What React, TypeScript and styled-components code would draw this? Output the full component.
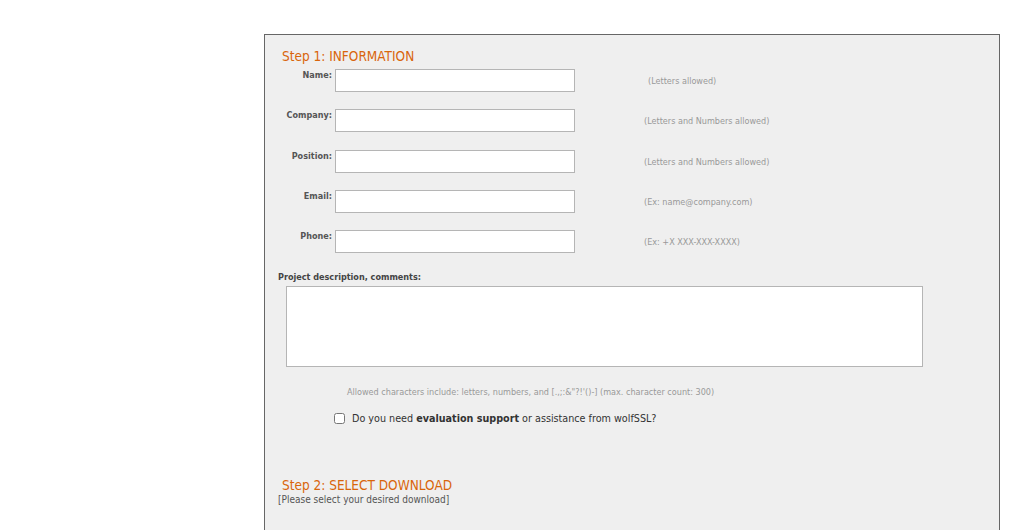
import React from "react";
import styled, { createGlobalStyle } from "styled-components";

const GlobalStyle = createGlobalStyle`
  body {
    margin: 0;
    background: #fff;
    font-family: "DejaVu Sans Condensed", "DejaVu Sans", sans-serif;
  }
`;

const fields = [
  { label: "Name:", hint: "(Letters allowed)", indent: 4 },
  { label: "Company:", hint: "(Letters and Numbers allowed)", indent: 0 },
  { label: "Position:", hint: "(Letters and Numbers allowed)", indent: 0 },
  { label: "Email:", hint: "(Ex: name@company.com)", indent: 0 },
  { label: "Phone:", hint: "(Ex: +X XXX-XXX-XXXX)", indent: 0 },
];

export default function App() {
  return (
    <Page>
      <GlobalStyle />
      <Panel>
        <StepTitle>Step 1: INFORMATION</StepTitle>
        <Fields>
          {fields.map((f) => (
            <FieldRow key={f.label}>
              <Label>{f.label}</Label>
              <TextInput type="text" />
              <Hint $indent={f.indent}>{f.hint}</Hint>
            </FieldRow>
          ))}
        </Fields>

        <CommentLabel>Project description, comments:</CommentLabel>
        <Comments />
        <Allowed>
          Allowed characters include: letters, numbers, and [.,;:&amp;"?!'()-] (max. character count: 300)
        </Allowed>
        <SupportRow>
          <Check type="checkbox" />
          <SupportText>
            Do you need <b>evaluation support</b> or assistance from wolfSSL?
          </SupportText>
        </SupportRow>

        <StepTitle $second>Step 2: SELECT DOWNLOAD</StepTitle>
        <Note>[Please select your desired download]</Note>
      </Panel>
    </Page>
  );
}

const Page = styled.div`
  padding: 34px 10px 0 264px;
  height: 530px;
  box-sizing: border-box;
  overflow: hidden;
`;

const Panel = styled.div`
  width: 736px;
  min-height: 540px;
  box-sizing: border-box;
  border: 1px solid #666;
  border-bottom: none;
  background: #efefef;
  padding: 14px 0 0 0;
`;

const StepTitle = styled.div<{ $second?: boolean }>`
  margin: ${(p) => (p.$second ? "53px 0 0 17px" : "0 0 0 17px")};
  font-size: 13.5px;
  line-height: 15px;
  color: #d9650b;
`;

const Fields = styled.div`
  display: flex;
  flex-direction: column;
  margin-top: 5px;
`;

const FieldRow = styled.div`
  display: grid;
  grid-template-columns: 67px 240px auto;
  column-gap: 3px;
  height: 40.25px;
`;

const Label = styled.div`
  text-align: right;
  font-size: 9px;
  font-weight: bold;
  color: #555;
  padding-top: 1px;
`;

const TextInput = styled.input`
  width: 240px;
  height: 23px;
  box-sizing: border-box;
  border: 1px solid #b5b5b5;
  background: #fff;
  margin: 0;
  padding: 2px 4px;
`;

const Hint = styled.div<{ $indent: number }>`
  padding: 1px 0 0 ${(p) => 66 + p.$indent}px;
  font-size: 9px;
  color: #999;
  line-height: 23px;
`;

const CommentLabel = styled.div`
  margin: 2px 0 0 13px;
  font-size: 9px;
  font-weight: bold;
  color: #444;
`;

const Comments = styled.textarea`
  display: block;
  margin: 4px 0 0 21px;
  width: 637px;
  height: 81px;
  box-sizing: border-box;
  border: 1px solid #b5b5b5;
  resize: none;
`;

const Allowed = styled.div`
  margin: 20px 0 0 82px;
  font-size: 9px;
  color: #999;
`;

const SupportRow = styled.div`
  display: flex;
  align-items: center;
  margin: 15px 0 0 69px;
`;

const Check = styled.input`
  width: 11px;
  height: 11px;
  margin: 0 7px 0 0;
`;

const SupportText = styled.span`
  font-size: 10.7px;
  color: #333;
`;

const Note = styled.div`
  margin: 1px 0 0 13px;
  font-size: 10px;
  color: #555;
`;
